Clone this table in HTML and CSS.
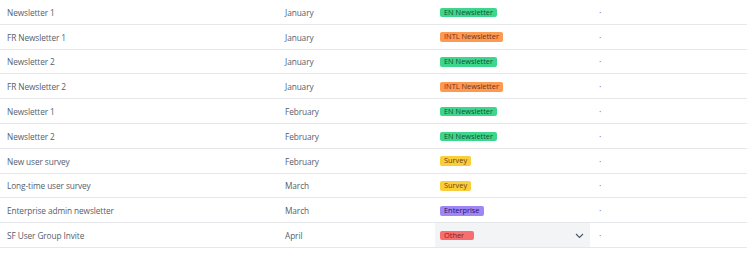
FILE: index.html
```html
<!DOCTYPE html>
<html>
<head>
<meta charset="utf-8">
<link rel="stylesheet" href="styles.css">
</head>
<body>
<div class="table">
  <div class="row"><div class="c name">Newsletter 1</div><div class="c month">January</div><div class="c tag"><span class="badge green">EN Newsletter</span></div><div class="c extra"><span class="dot">·</span></div></div>
  <div class="row"><div class="c name">FR Newsletter 1</div><div class="c month">January</div><div class="c tag"><span class="badge orange">INTL Newsletter</span></div><div class="c extra"><span class="dot">·</span></div></div>
  <div class="row"><div class="c name">Newsletter 2</div><div class="c month">January</div><div class="c tag"><span class="badge green">EN Newsletter</span></div><div class="c extra"><span class="dot">·</span></div></div>
  <div class="row"><div class="c name">FR Newsletter 2</div><div class="c month">January</div><div class="c tag"><span class="badge orange">INTL Newsletter</span></div><div class="c extra"><span class="dot">·</span></div></div>
  <div class="row"><div class="c name">Newsletter 1</div><div class="c month">February</div><div class="c tag"><span class="badge green">EN Newsletter</span></div><div class="c extra"><span class="dot">·</span></div></div>
  <div class="row"><div class="c name">Newsletter 2</div><div class="c month">February</div><div class="c tag"><span class="badge green">EN Newsletter</span></div><div class="c extra"><span class="dot">·</span></div></div>
  <div class="row"><div class="c name">New user survey</div><div class="c month">February</div><div class="c tag"><span class="badge yellow">Survey</span></div><div class="c extra"><span class="dot">·</span></div></div>
  <div class="row"><div class="c name">Long-time user survey</div><div class="c month">March</div><div class="c tag"><span class="badge yellow">Survey</span></div><div class="c extra"><span class="dot">·</span></div></div>
  <div class="row"><div class="c name">Enterprise admin newsletter</div><div class="c month">March</div><div class="c tag"><span class="badge purple">Enterprise</span></div><div class="c extra"><span class="dot">·</span></div></div>
  <div class="row"><div class="c name">SF User Group Invite</div><div class="c month">April</div><div class="c tag active"><span class="badge red">Other</span><svg class="chev" width="9" height="6" viewBox="0 0 9 6"><path d="M1 1l3.5 3.5L8 1" fill="none" stroke="#4b5563" stroke-width="1.1"/></svg></div><div class="c extra"><span class="dot">·</span></div></div>
</div>
</body>
</html>
```
FILE: styles.css
```css
html, body {
  margin: 0;
  padding: 0;
  background: #ffffff;
}
body {
  font-family: "Open Sans", "Noto Sans", sans-serif;
  font-size: 8.3px;
  letter-spacing: -0.1px;
  color: #555e6c;
}
.table {
  display: flex;
  flex-direction: column;
}
.row {
  display: grid;
  grid-template-columns: 277px 158px 155px 1fr;
  height: 23.8px;
  border-bottom: 1px solid #e5e7eb;
}
.c {
  display: flex;
  align-items: center;
  padding-top: 1px;
}
.name {
  padding-left: 7px;
}
.month {
  padding-left: 8px;
}
.tag {
  padding-left: 5px;
  padding-right: 6px;
  justify-content: space-between;
}
.tag.active {
  background: #f3f4f6;
}
.extra {
  padding-left: 9px;
}
.dot {
  color: #6b7280;
  font-size: 9px;
}
.badge {
  display: inline-block;
  font-size: 7.4px;
  letter-spacing: 0;
  line-height: 9.5px;
  height: 9.5px;
  padding: 0 4px;
  border-radius: 2px;
}
.green { background: #3dd68c; color: #14532d; }
.orange { background: #fb9a52; color: #7c2d12; }
.yellow { background: #f9ce3a; color: #713f12; }
.purple { background: #9f86f7; color: #2e1065; }
.red { background: #f76e6e; color: #7f1d1d; padding-right: 10px; }
.chev { display: block; }
```
